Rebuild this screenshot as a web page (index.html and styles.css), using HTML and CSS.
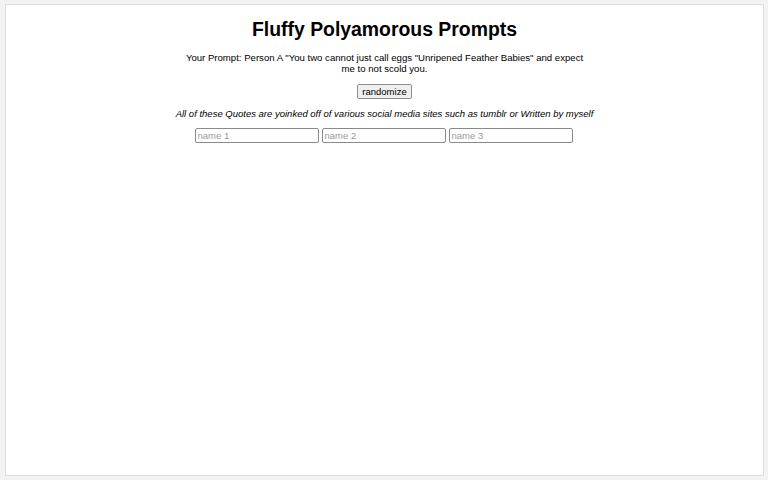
FILE: index.html
```html
<!DOCTYPE html>
<html lang="en-US">
  <head>
    <meta charset="UTF-8" />
    <title>Fluffy Polyamorous Prompts</title>
    <link rel="stylesheet" href="styles.css">
  </head>
  <body>
    <div class="page">
      <h1 class="title">Fluffy Polyamorous Prompts</h1>
      <p id="prompt" class="prompt">Your Prompt: Person A "You two cannot just call eggs "Unripened Feather Babies" and expect me to not scold you.</p>
      <button id="randomize" class="btn">randomize</button>
      <p class="credit">All of these Quotes are yoinked off of various social media sites such as tumblr or Written by myself</p>
      <div class="names">
        <input type="text" class="name" placeholder="name 1" />
        <input type="text" class="name" placeholder="name 2" />
        <input type="text" class="name" placeholder="name 3" />
      </div>
    </div>
  </body>
</html>
```

FILE: styles.css
```css
body {
  margin: 0;
  padding: 4px 4px 4px 5px;
  font-family: "Liberation Sans", Arial, sans-serif;
  font-size: 9.5px;
  background-color: #f3f3f3;
  color: #000;
}

.page {
  display: flex;
  flex-direction: column;
  align-items: center;
  width: 759px;
  height: 472px;
  box-sizing: border-box;
  background: #fff;
  border: 1px solid #dedede;
  text-align: center;
}

.title {
  font-size: 19.4px;
  margin: 13px 0 0;
}

.prompt {
  max-width: 400px;
  margin: 11px 0 0;
  font-size: 9.6px;
  line-height: 11px;
}

.btn {
  margin-top: 10px;
  font-family: inherit;
  font-size: 9.5px;
  padding: 1px 4px;
  background: #efefef;
  border: 1px solid #8f8f8f;
  border-radius: 2px;
}

.credit {
  font-style: italic;
  margin: 9px 0 0;
}

.names {
  display: flex;
  gap: 3px;
  margin: 9px 2px 0 0;
}

.name {
  width: 124px;
  height: 15px;
  box-sizing: border-box;
  padding: 0 2px;
  font-family: inherit;
  font-size: 9.5px;
  border: 1px solid #8a8a8a;
  border-radius: 2px;
}

.name::placeholder {
  color: #9a9a9a;
}
```
